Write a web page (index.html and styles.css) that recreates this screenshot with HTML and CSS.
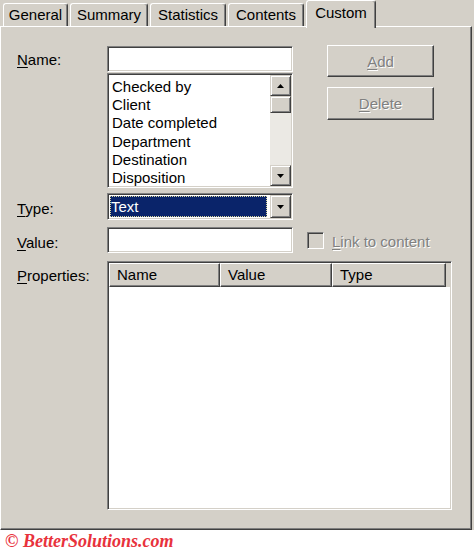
FILE: index.html
```html
<!DOCTYPE html>
<html>
<head>
<meta charset="utf-8">
<link rel="stylesheet" href="styles.css">
</head>
<body>
<div class="dialog">
  <div class="tabs">
    <div class="tab tab-general">General</div>
    <div class="tab tab-summary">Summary</div>
    <div class="tab tab-statistics">Statistics</div>
    <div class="tab tab-contents">Contents</div>
    <div class="tab tab-custom active">Custom</div>
  </div>
  <div class="panel">
    <div class="form">
      <div class="lbl lbl-name"><u>N</u>ame:</div>
      <div class="name-col">
        <div class="field name-input"></div>
        <div class="field listbox">
          <ul class="items">
            <li>Checked by</li>
            <li>Client</li>
            <li>Date completed</li>
            <li>Department</li>
            <li>Destination</li>
            <li>Disposition</li>
          </ul>
          <div class="vscroll">
            <div class="sbtn"><svg width="7" height="4" viewBox="0 0 7 4"><polygon points="3.5,0 7,4 0,4" fill="#000"/></svg></div>
            <div class="sbtn thumb"></div>
            <div class="track"></div>
            <div class="sbtn"><svg width="7" height="4" viewBox="0 0 7 4"><polygon points="0,0 7,0 3.5,4" fill="#000"/></svg></div>
          </div>
        </div>
      </div>
      <div class="btn-col">
        <div class="btn"><u>A</u>dd</div>
        <div class="btn btn-delete"><u>D</u>elete</div>
      </div>

      <div class="lbl lbl-type"><u>T</u>ype:</div>
      <div class="field combo">
        <div class="combo-sel"><span>Text</span></div>
        <div class="sbtn combo-btn"><svg width="7" height="4" viewBox="0 0 7 4"><polygon points="0,0 7,0 3.5,4" fill="#000"/></svg></div>
      </div>

      <div class="lbl lbl-value"><u>V</u>alue:</div>
      <div class="field value-input"></div>
      <div class="check">
        <span class="box"></span>
        <span class="check-text"><u>L</u>ink to content</span>
      </div>

      <div class="lbl lbl-props"><u>P</u>roperties:</div>
      <div class="field listview">
        <div class="lv-header">
          <div class="hcell h-name">Name</div>
          <div class="hcell h-value">Value</div>
          <div class="hcell h-type">Type</div>
          <div class="hcell h-rest"></div>
        </div>
      </div>
    </div>
  </div>
</div>
<div class="copyright">© BetterSolutions.com</div>
</body>
</html>
```
FILE: styles.css
```css
body {
  margin: 0;
  background: #fff;
  font-family: "Liberation Sans", Arial, sans-serif;
  font-size: 15px;
  color: #000;
}

u { text-decoration: underline; text-underline-offset: 2px; }

.dialog {
  width: 474px;
  height: 530px;
  background: #d4d0c8;
}

/* Tabs */
.tabs {
  display: flex;
  align-items: flex-end;
  gap: 2px;
  height: 26px;
  padding-left: 3px;
  box-sizing: border-box;
}
.tab {
  height: 23px;
  box-sizing: border-box;
  border: 1px solid #fff;
  border-right-color: #404040;
  border-bottom: none;
  box-shadow: inset -1px 0 #808080;
  border-radius: 3px 3px 0 0;
  text-align: center;
  line-height: 22px;
  background: #d4d0c8;
}
.tab-general { width: 65px; }
.tab-summary { width: 78px; }
.tab-statistics { width: 76px; }
.tab-contents { width: 76px; }
.tab-custom { width: 70px; }
.tab.active {
  height: 28px;
  margin-bottom: -2px;
  position: relative;
  z-index: 1;
  line-height: 24px;
}

/* Panel */
.panel {
  width: 472px;
  height: 504px;
  box-sizing: border-box;
  border: 1px solid;
  border-color: #fff #404040 #404040 #fff;
  box-shadow: inset -1px -1px #808080;
  padding: 19px 0 0 16px;
}

.form {
  display: grid;
  grid-template-columns: 90px 186px 34px 107px 18px;
  align-items: start;
}

.lbl {
  grid-column: 1;
  line-height: 18px;
}
.lbl-name { padding-top: 5px; }
.lbl-type { margin-top: 5px; padding-top: 7px; }
.lbl-value { margin-top: 7px; padding-top: 7px; }
.lbl-props { margin-top: 8px; padding-top: 6px; }

/* Sunken fields */
.field {
  background: #fff;
  box-sizing: border-box;
  border: 1px solid;
  border-color: #808080 #fff #fff #808080;
  box-shadow: inset 1px 1px #404040, inset -1px -1px #d4d0c8;
  padding: 1px;
}

.name-col {
  grid-column: 2;
  display: flex;
  flex-direction: column;
}
.name-input { height: 26px; }
.listbox {
  margin-top: 1px;
  height: 115px;
  display: flex;
}
.items {
  list-style: none;
  margin: 0;
  padding: 3px 0 0 3px;
  flex: 1;
  line-height: 18.2px;
  overflow: hidden;
}

.vscroll {
  width: 21px;
  display: flex;
  flex-direction: column;
}
.sbtn {
  box-sizing: border-box;
  background: #d4d0c8;
  border: 1px solid;
  border-color: #d4d0c8 #404040 #404040 #d4d0c8;
  box-shadow: inset 1px 1px #fff, inset -1px -1px #808080;
  display: flex;
  align-items: center;
  justify-content: center;
  height: 21px;
}
.thumb { height: 17px; }
.track {
  flex: 1;
  background: #ebe9e4;
}

/* Buttons */
.btn-col {
  grid-column: 4;
  grid-row: 1;
  margin-top: -1px;
  display: flex;
  flex-direction: column;
}
.btn {
  height: 32px;
  box-sizing: border-box;
  border: 1px solid;
  border-color: #fff #404040 #404040 #fff;
  box-shadow: inset -1px -1px #808080;
  display: flex;
  align-items: center;
  justify-content: center;
  color: #808080;
  text-shadow: 1px 1px 0 #fff;
}
.btn-delete { margin-top: 10px; height: 33px; }

/* Combo */
.combo {
  grid-column: 2;
  margin-top: 5px;
  height: 27px;
  display: flex;
}
.combo-sel {
  flex: 1;
  padding: 1px 3px 1px 1px;
  display: flex;
}
.combo-sel span {
  flex: 1;
  background: #0a246a;
  color: #fff;
  outline: 1px dotted #d8d49a;
  outline-offset: -1px;
  padding-left: 1px;
  line-height: 21px;
}
.combo-btn {
  width: 21px;
  height: auto;
}

/* Value row */
.value-input {
  grid-column: 2;
  margin-top: 7px;
  height: 26px;
}
.check {
  grid-column: 3 / span 3;
  margin-top: 7px;
  height: 26px;
  padding-left: 14px;
  display: flex;
  align-items: center;
  gap: 8px;
}
.check .box {
  width: 17px;
  height: 17px;
  box-sizing: border-box;
  border: 1px solid;
  border-color: #808080 #fff #fff #808080;
  box-shadow: inset 1px 1px #404040, inset -1px -1px #d4d0c8;
  background: #d4d0c8;
}
.check-text {
  color: #808080;
  text-shadow: 1px 1px 0 #fff;
  padding-top: 3px;
}

/* List view */
.listview {
  grid-column: 2 / span 4;
  margin-top: 8px;
  height: 249px;
}
.lv-header {
  display: flex;
  height: 24px;
}
.hcell {
  box-sizing: border-box;
  background: #d4d0c8;
  border: 1px solid;
  border-color: #fff #404040 #404040 #fff;
  box-shadow: inset -1px -1px #808080;
  padding-left: 7px;
  line-height: 22px;
}
.h-name { width: 111px; }
.h-value { width: 112px; }
.h-type { width: 114px; }
.h-rest { flex: 1; border: none; box-shadow: none; padding: 0; }

/* Copyright */
.copyright {
  font-family: "Liberation Serif", "Times New Roman", serif;
  font-style: italic;
  font-weight: bold;
  font-size: 18px;
  color: #e8323c;
  line-height: 23px;
  padding-left: 5px;
}
```
